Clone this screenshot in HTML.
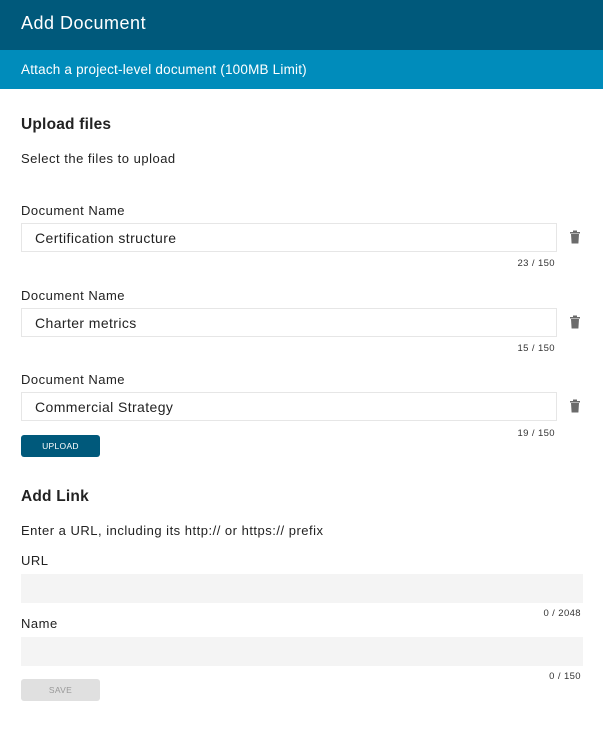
<!DOCTYPE html><html><head><style>
*{margin:0;padding:0;box-sizing:border-box}
body{width:603px;height:731px;background:#fff;font-family:"Liberation Sans",sans-serif;position:relative;overflow:hidden;color:#222}
div,span,svg{position:absolute}
.h{left:0;top:0;width:603px;height:50px;background:#00597b;color:#fff;font-size:18px;padding:13px 21px;letter-spacing:.5px}
.s{left:0;top:50px;width:603px;height:39px;background:#008cbb;color:#fff;font-size:13.5px;padding:12px 21px;letter-spacing:.2px}
.t{left:21px;font-size:15.5px;font-weight:bold;color:#222;letter-spacing:.2px}
.p{left:21px;font-size:13px;letter-spacing:.5px;color:#222}
.in{left:21px;width:536px;height:29px;border:1px solid #e6e6e6;background:#fff;font-size:14px;padding:6px 13px;letter-spacing:.4px;color:#222}
.in2{left:21px;width:562px;height:29px;background:#f4f4f4}
.c{font-size:9.5px;color:#333;text-align:right;letter-spacing:.4px}
.tr{left:569px;width:12px;height:14px}
.b{left:21px;width:79px;height:22px;border-radius:3px;font-size:8.5px;text-align:center;line-height:22px;letter-spacing:.3px}
</style></head><body>
<div class="h">Add Document</div>
<div class="s">Attach a project-level document (100MB Limit)</div>
<div class="t" style="top:116px">Upload files</div>
<div class="p" style="top:151px">Select the files to upload</div>

<div class="p" style="top:203px">Document Name</div>
<div class="in" style="top:223px">Certification structure</div>
<svg class="tr" style="top:230px" viewBox="0 0 12 14"><path d="M1 2h10v1.5H1zM4 .5h4v1.5H4zM2 4h8l-.6 9.5H2.6z" fill="#6b6b6b"/></svg>
<div class="c" style="top:258px;left:455px;width:100px">23 / 150</div>

<div class="p" style="top:288px">Document Name</div>
<div class="in" style="top:308px">Charter metrics</div>
<svg class="tr" style="top:315px" viewBox="0 0 12 14"><path d="M1 2h10v1.5H1zM4 .5h4v1.5H4zM2 4h8l-.6 9.5H2.6z" fill="#6b6b6b"/></svg>
<div class="c" style="top:343px;left:455px;width:100px">15 / 150</div>

<div class="p" style="top:372px">Document Name</div>
<div class="in" style="top:392px">Commercial Strategy</div>
<svg class="tr" style="top:399px" viewBox="0 0 12 14"><path d="M1 2h10v1.5H1zM4 .5h4v1.5H4zM2 4h8l-.6 9.5H2.6z" fill="#6b6b6b"/></svg>
<div class="c" style="top:428px;left:455px;width:100px">19 / 150</div>
<div class="b" style="top:435px;background:#00597b;color:#fff">UPLOAD</div>

<div class="t" style="top:488px">Add Link</div>
<div class="p" style="top:523px">Enter a URL, including its http:// or https:// prefix</div>
<div class="p" style="top:553px">URL</div>
<div class="in2" style="top:574px"></div>
<div class="c" style="top:608px;left:481px;width:100px">0 / 2048</div>
<div class="p" style="top:616px">Name</div>
<div class="in2" style="top:637px"></div>
<div class="c" style="top:671px;left:481px;width:100px">0 / 150</div>
<div class="b" style="top:679px;background:#e0e0e0;color:#999">SAVE</div>
</body></html>
